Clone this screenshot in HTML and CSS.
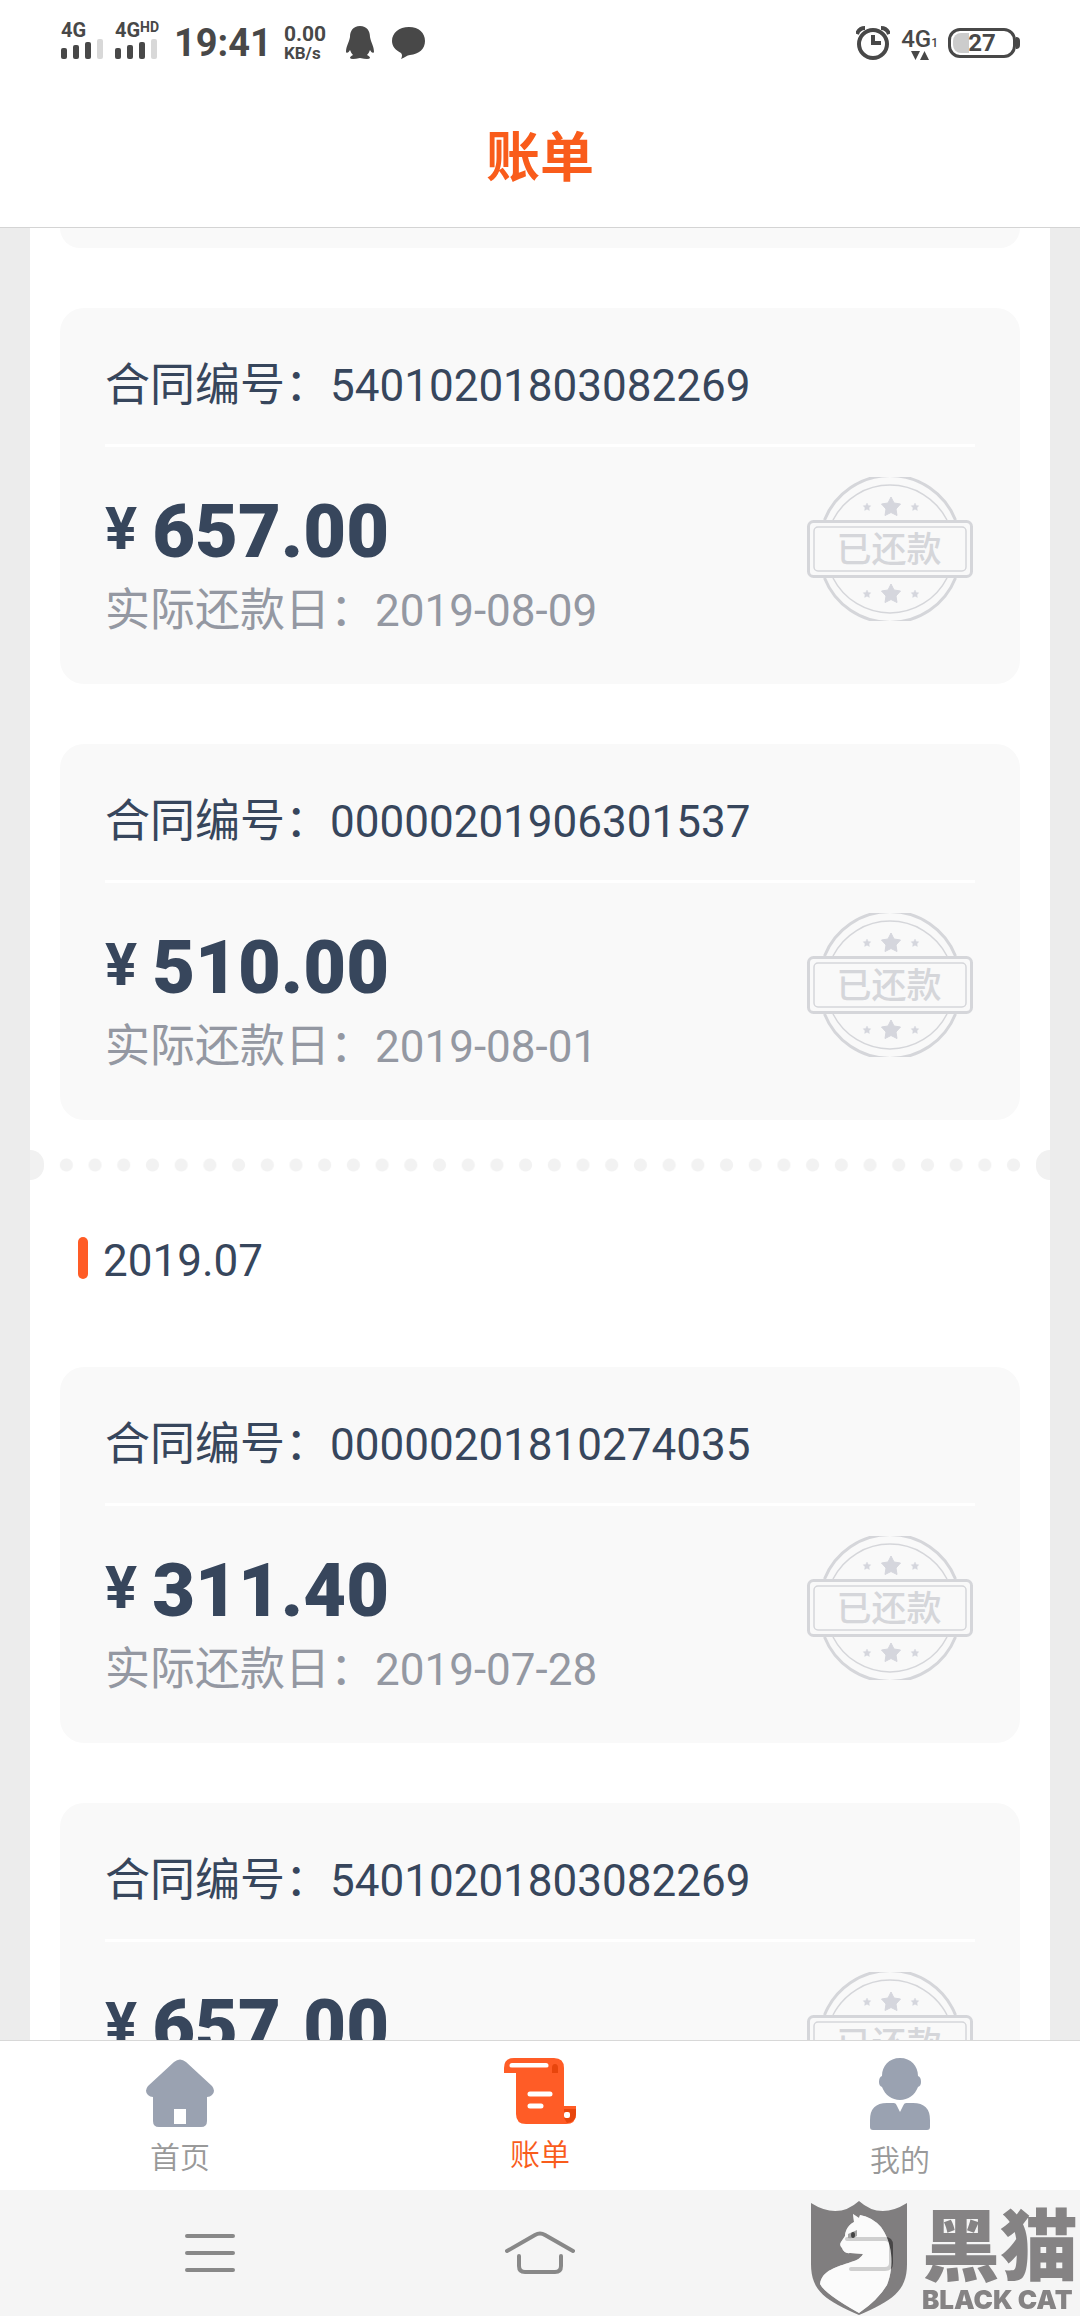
FILE: index.html
```html
<!DOCTYPE html>
<html lang="zh-CN">
<head>
<meta charset="utf-8">
<meta name="viewport" content="width=device-width, initial-scale=1">
<title>账单</title>
<link rel="stylesheet" href="styles.css">
</head>
<body>
<svg class="defs" aria-hidden="true">
  <defs>
    <path id="star" d="M0-10 3-4 9.500-3 5 2 6 8.500 0 5.500-6 8.500-5 2-9.500-3-3-4z"/>
    <symbol id="stamp" viewBox="0 0 166 144">
      <g fill="none" stroke="#d5d6da">
        <path stroke-width="3" d="M17.500 43A70.500 70.500 0 0 1 148.500 43M17.500 101A70.500 70.500 0 0 0 148.500 101"/>
        <path stroke-width="1.500" d="M26 43A64 64 0 0 1 140 43M26 101A64 64 0 0 0 140 101"/>
        <rect x="1.500" y="44.500" width="163" height="55" rx="5" stroke-width="3"/>
        <rect x="7" y="50" width="152" height="44" rx="4" stroke-width="1.500"/>
      </g>
      <g fill="#d5d6dd" stroke="#d5d6dd" stroke-linejoin="round">
        <use href="#star" x="84" y="30"/><use href="#star" x="84" y="117"/>
        <use href="#star" transform="translate(60 30) scale(.4)"/><use href="#star" transform="translate(108 30) scale(.4)"/>
        <use href="#star" transform="translate(60 117) scale(.4)"/><use href="#star" transform="translate(108 117) scale(.4)"/>
      </g>
      <text class="stamp-text" x="82" y="85" text-anchor="middle">已还款</text>
    </symbol>
  </defs>
</svg>
<div class="app">
  <header class="status">
    <div class="status-group">
      <div class="signal"><span class="net">4G</span>
        <svg width="42" height="20" fill="#484848"><rect y="9" width="6" height="11" rx="2"/><rect x="12" y="6" width="6" height="14" rx="2"/><rect x="24" y="3" width="6" height="17" rx="2"/><rect x="36" width="6" height="20" rx="2" fill="#d8d8d8"/></svg>
      </div>
      <div class="signal signal-hd"><span class="net">4G<sup>HD</sup></span>
        <svg width="42" height="20" fill="#484848"><rect y="9" width="6" height="11" rx="2"/><rect x="12" y="6" width="6" height="14" rx="2"/><rect x="24" y="3" width="6" height="17" rx="2"/><rect x="36" width="6" height="20" rx="2" fill="#d8d8d8"/></svg>
      </div>
      <time class="clock">19:41</time>
      <div class="speed"><span>0.00</span><small>KB/s</small></div>
      <svg class="qq" width="28" height="34" fill="#484848"><path d="M14 0C7 0 4 5 4 11C3 17 0 20 0 26C1 28 3 26 4 24Q5 27 7 29C5 30 4 31 4 32Q5 34 14 32Q23 34 24 32C24 31 23 30 21 29Q23 27 24 24C25 26 27 28 28 26C28 20 25 17 24 11C24 5 21 0 14 0z"/></svg>
      <svg width="34" height="34" fill="#484848"><path d="M17 1C27 1 33 7 33 15C33 23 27 28 18 29C15 29 12 32 9 33Q11 29 9 27C3 24 0 20 0 15C0 7 7 1 17 1z"/></svg>
    </div>
    <div class="status-group">
      <svg width="34" height="34" fill="none" stroke="#484848"><circle cx="17" cy="18" r="14" stroke-width="4"/><path stroke-width="4" d="M17 9V17H25"/><path stroke-width="4" d="M1 8Q3 2 9 2M25 2Q31 2 33 8"/></svg>
      <div class="mobile"><span class="net">4G<sub>1</sub></span>
        <svg width="18" height="9" fill="#484848"><path d="M0 0H9L4.500 9zM9 9H18L13.500 0z"/></svg>
      </div>
      <div class="battery"><span class="level"></span><span class="percent">27</span></div>
    </div>
  </header>
  <div class="titlebar"><h1>账单</h1></div>

  <main class="scroll">
    <div class="paper">
      <div class="card-tail"></div>
      <article class="card">
        <p class="contract">合同编号：<span class="num">54010201803082269</span></p>
        <div class="card-body">
          <div><p class="amount"><span class="yen">¥</span><strong>657.00</strong></p><p class="date">实际还款日：<span class="num">2019-08-09</span></p></div>
          <svg class="stamp" role="img" aria-label="已还款"><use href="#stamp"/></svg>
        </div>
      </article>
      <article class="card">
        <p class="contract">合同编号：<span class="num">00000201906301537</span></p>
        <div class="card-body">
          <div><p class="amount"><span class="yen">¥</span><strong>510.00</strong></p><p class="date">实际还款日：<span class="num">2019-08-01</span></p></div>
          <svg class="stamp" role="img" aria-label="已还款"><use href="#stamp"/></svg>
        </div>
      </article>
      <div class="tear"><i class="notch notch-left"></i><i class="dots"></i><i class="notch notch-right"></i></div>
      <h2 class="month">2019.07</h2>
      <article class="card">
        <p class="contract">合同编号：<span class="num">00000201810274035</span></p>
        <div class="card-body">
          <div><p class="amount"><span class="yen">¥</span><strong>311.40</strong></p><p class="date">实际还款日：<span class="num">2019-07-28</span></p></div>
          <svg class="stamp" role="img" aria-label="已还款"><use href="#stamp"/></svg>
        </div>
      </article>
      <article class="card">
        <p class="contract">合同编号：<span class="num">54010201803082269</span></p>
        <div class="card-body">
          <div><p class="amount"><span class="yen">¥</span><strong>657.00</strong></p></div>
          <svg class="stamp" role="img" aria-label="已还款"><use href="#stamp"/></svg>
        </div>
      </article>
    </div>
  </main>

  <nav class="tabs">
    <a class="tab" href="#home">
      <svg width="70" height="69" fill="#9aa2b1"><path d="M29 4Q35-1 41 4L67 28Q71 33 67 37Q65 39 62 39V63Q62 69 56 69H14Q8 69 8 63V39Q5 39 3 37Q-1 33 3 28z"/><path fill="#fff" d="M29 51h12v15H29z"/></svg>
      首页</a>
    <a class="tab tab-active" href="#bills">
      <svg width="72" height="66" fill="#ff5c26"><path d="M10 0H50Q60 0 60 10V48H72V56Q72 66 62 66H22Q12 66 12 56V15H0V10Q0 0 10 0z"/><path fill="#e8450c" d="M48 10Q48 6 51 6Q54 6 54 10V15H48zM60 48H72V56Q72 64 63 65L60 60z"/><path fill="#ff5c26" d="M60 48H72V51H60z"/><path d="M8 7.500H42M26 36H46M26 48H37" stroke="#fff" stroke-linecap="round" stroke-width="5"/><path stroke="#ff5c26" stroke-width="2" d="M6 10.500H44"/><rect x="60" y="54" width="6" height="6" rx="2" fill="#fff"/></svg>
      账单</a>
    <a class="tab" href="#me">
      <svg width="60" height="72" fill="#9aa2b1"><path d="M30 0C41 0 48 8 48 18Q51 19 51 24Q51 28 48 29C45 37 38 42 30 42S15 37 12 29Q9 28 9 24Q9 19 12 18C12 8 19 0 30 0z"/><path d="M17 45H24Q26 45 27 48L30 54L33 48Q34 45 36 45H43Q60 45 60 62V69Q60 72 57 72H3Q0 72 0 69V62Q0 45 17 45z"/></svg>
      我的</a>
  </nav>

  <footer class="system">
    <button aria-label="菜单"><svg width="50" height="44"><path d="M2 5H48M2 22H48M2 39H48"/></svg></button>
    <button aria-label="主页"><svg width="70" height="44"><path d="M2 20 30 4Q35 1 40 4L68 20M14 25V35Q14 41 20 41H50Q56 41 56 35V25"/></svg></button>
    <button aria-label="返回"><svg width="50" height="44"><path d="M2 8H40Q46 8 46 14V32Q46 38 40 38H6"/></svg></button>
    <div class="watermark">
      <svg width="98" height="116">
        <path class="shield" fill="#858384" fill-rule="evenodd" d="M1 3Q28 20 49 1Q70 20 97 3V64C97 92 81 101 49 115C17 101 1 92 1 64zM43 14L44 22C38 25 35 31 35 36L31 42Q29 45 32 48Q34 54 40 53L53 54Q51 59 41 62C27 67 12 70 10 84Q15 94 49 113Q68 100 77 85C85 65 82 42 71 27Q62 17 50 15L49 18z"/>
        <path class="cat" d="M43 14L44 22C38 25 35 31 35 36L31 42Q29 45 32 48Q34 54 40 53L53 54Q51 59 41 62C27 67 12 70 10 84Q15 94 49 113Q68 100 77 85C85 65 82 42 71 27Q62 17 50 15L49 18z"/>
        <path fill="#a5a5a5" d="M38 34 47 30V36Q43 39 38 38z"/><ellipse cx="43" cy="35" rx="2" ry="3" fill="#444"/>
      </svg>
      <div class="brand"><b>黑猫</b><span>BLACK CAT</span></div>
    </div>
  </footer>
</div>
</body>
</html>
```
FILE: styles.css
```css
* { box-sizing: border-box; margin: 0; padding: 0; }
body { font-family: Roboto, "Noto Sans CJK SC", sans-serif; color: #37465c; background: #fff; }
svg { display: block; flex: none; }
.defs { position: absolute; width: 0; height: 0; }
.app { display: flex; flex-direction: column; height: 100vh; overflow: hidden; }

.status { display: flex; justify-content: space-between; flex: none; height: 84px; padding: 2px 60px 0; color: #484848; font-weight: 700; }
.status-group { display: flex; align-items: center; }
.signal { display: flex; flex-direction: column; width: 54px; padding-left: 1px; margin-top: -6px; }
.net { display: block; font-size: 20px; line-height: 18px; white-space: nowrap; }
.net sup { font-size: 14px; line-height: 1px; vertical-align: 5px; }
.net sub { font-size: 12px; line-height: 1px; vertical-align: 0; }
.signal-hd { width: 60px; }
.clock { font-size: 38px; line-height: 44px; }
.speed { display: flex; flex-direction: column; margin: 0 20px 0 12px; font-size: 21px; line-height: 20px; }
.speed small { font-size: 17px; line-height: 18px; }
.qq { margin-right: 18px; }
.mobile { display: flex; flex-direction: column; align-items: center; margin: 0 10px 0 11px; }
.mobile .net { font-size: 24px; line-height: 24px; font-weight: 500; }
.battery { position: relative; display: flex; align-items: center; justify-content: center; width: 68px; height: 30px; border: 3px solid #484848; border-radius: 12px; font-size: 24px; margin-right: 4px; }
.battery::after { content: ""; position: absolute; right: -7px; top: 6px; width: 4px; height: 12px; background: #484848; border-radius: 0 4px 4px 0; }
.level { position: absolute; left: 2px; top: 2px; bottom: 2px; width: 16px; background: #ccc; border-radius: 8px 0 0 8px; }
.percent { position: relative; }

.titlebar { flex: none; display: flex; align-items: center; justify-content: center; height: 144px; padding-top: 6px; border-bottom: 1px solid #d4d4d4; }
.titlebar h1 { font-size: 54px; line-height: 80px; font-weight: 700; color: #f95c1b; }

.scroll { flex: 1; min-height: 0; overflow-y: auto; scrollbar-width: none; background: #ececec; padding: 0 30px; }
.paper { background: #fff; padding-bottom: 60px; }
.card-tail { height: 20px; margin: 0 30px; background: #f9f9f9; border-radius: 0 0 24px 24px; }
.card { margin: 60px 30px 0; padding: 0 45px 43px; background: #f9f9f9; border-radius: 24px; }
.contract { padding: 48px 0 28px; font-size: 45px; line-height: 60px; border-bottom: 3px solid #fff; }
.num { font-size: 44px; }
.card-body { display: flex; justify-content: space-between; padding-top: 30px; }
.amount { display: flex; align-items: center; gap: 15px; height: 104px; padding-top: 5px; line-height: 99px; font-weight: 700; }
.amount strong { font-size: 74px; }
.yen { font-size: 60px; line-height: 94px; height: 99px; }
.date { font-size: 45px; line-height: 60px; color: #9498a2; }
.stamp { width: 166px; height: 144px; margin-right: 2px; }
.stamp-text { font: 500 35px "Noto Sans CJK SC", sans-serif; fill: #d5d6da; }
.tear { display: flex; align-items: center; margin-top: 30px; height: 30px; }
.notch { width: 14px; height: 30px; background: #f1f1f1; }
.notch-left { border-radius: 0 15px 15px 0; }
.notch-right { border-radius: 15px 0 0 15px; }
.dots { flex: 1; height: 30px; margin: 0 8px; background: radial-gradient(circle, #f2f2f2 6px, transparent 7px) 0 0 / 29px 30px round; }
.month { display: flex; align-items: center; gap: 15px; margin: 51px 48px 76px; font-size: 44px; line-height: 60px; font-weight: 400; }
.month::before { content: ""; width: 10px; height: 42px; margin-bottom: 6px; border-radius: 5px; background: #ff5c26; }
.month + .card { margin-top: 0; }

.tabs { flex: none; display: flex; height: 150px; padding-top: 17px; background: #fff; border-top: 1px solid #d8d8d8; }
.tab { flex: 1; display: flex; flex-direction: column; align-items: center; gap: 8px; font: 350 30px/40px "Noto Sans CJK SC", sans-serif; color: #999; text-decoration: none; }
.tab-active { color: #f95c1b; }

.system { position: relative; flex: none; display: flex; justify-content: center; gap: 260px; height: 126px; background: #f5f5f5; }
.system button { width: 70px; display: flex; justify-content: center; align-items: center; border: 0; background: none; }
.system button path { fill: none; stroke: #888; stroke-width: 4px; stroke-linecap: round; }
.watermark { position: absolute; right: 0; top: 10px; display: flex; gap: 14px; width: 270px; color: #858384; }
.shield { mix-blend-mode: multiply; }
.cat { fill: #fff; fill-opacity: .6; }
.brand { display: flex; flex-direction: column; gap: 6px; white-space: nowrap; }
.brand b { font: 900 78px/82px "Noto Sans CJK SC", sans-serif; }
.brand span { font: 900 26px/24px Inter, sans-serif; }
```
